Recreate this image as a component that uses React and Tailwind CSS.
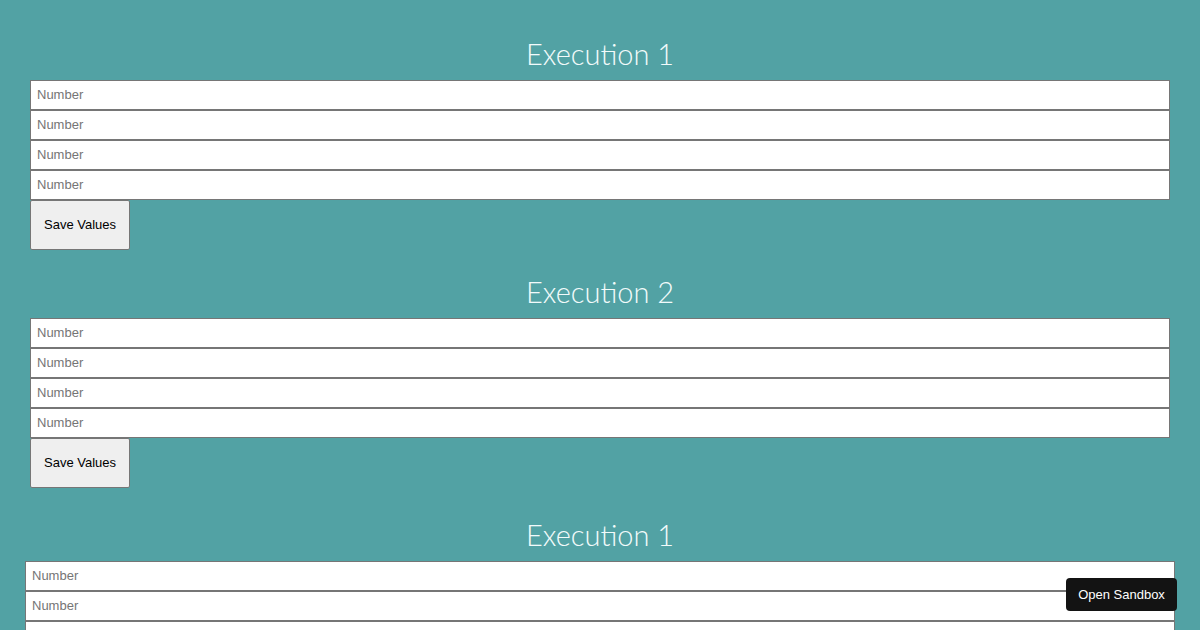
import React from 'react';

function Execution({ title, inset, withButton, rows = 4, gapTop }) {
    return (
        <div className={`${gapTop} ${inset}`}>
            <h2 className="text-center text-[29px] leading-[36px] font-light text-[#f2fbfb] mb-[8px] [font-family:Lato,sans-serif]">
                {title}
            </h2>
            <div className="flex flex-col">
                {Array.from({ length: rows }).map((_, i) => (
                    <input
                        key={i}
                        type="text"
                        placeholder="Number"
                        className="block w-full h-[30px] bg-white border border-[#767676] px-[6px] pb-[2px] text-[13px] text-black placeholder:text-[#757575] outline-none [font-family:'Liberation_Sans',Arial,sans-serif]"
                    />
                ))}
            </div>
            {withButton && (
                <button className="w-[100px] h-[50px] bg-[#efefef] border border-[#767676] rounded-[2px] text-[13px] text-black [font-family:'Liberation_Sans',Arial,sans-serif]">
                    Save Values
                </button>
            )}
        </div>
    );
}

export default function App() {
    return (
        <div className="relative h-[630px] overflow-hidden bg-[#52a2a4]">
            <Execution title="Execution 1" inset="mx-[30px]" gapTop="pt-[36px]" withButton />
            <Execution title="Execution 2" inset="mx-[30px]" gapTop="pt-[24px]" withButton />
            <Execution title="Execution 1" inset="mx-[25px]" gapTop="pt-[29px]" rows={3} />

            {/* floating sandbox link */}
            <div className="absolute left-[1066px] top-[578px] w-[111px] h-[33px] flex items-center justify-center rounded-[4px] bg-[#131313] text-white text-[13px] [font-family:'Liberation_Sans',Arial,sans-serif]">
                Open Sandbox
            </div>
        </div>
    );
}
